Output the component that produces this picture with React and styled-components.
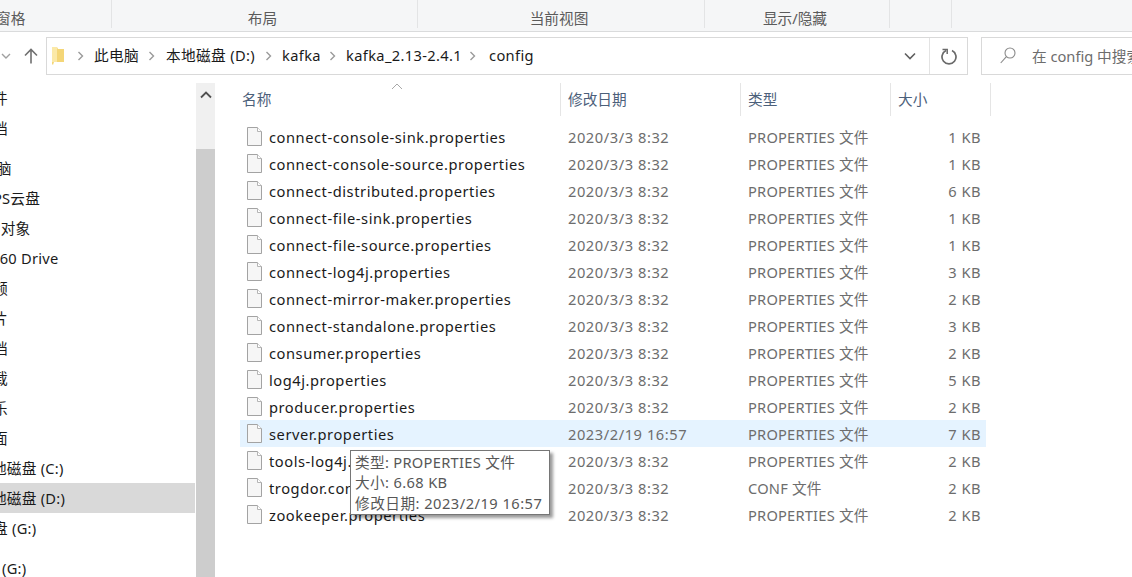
import React from 'react';
import styled, { createGlobalStyle } from 'styled-components';

const FONT = '"Noto Sans", "Noto Sans CJK SC", sans-serif';

const GlobalStyle = createGlobalStyle`
  html, body {
    margin: 0;
    padding: 0;
    background: #fff;
    overflow: hidden;
  }
  body {
    font-family: ${FONT};
    font-size: 14.67px;
  }
`;

const Window = styled.div`
  position: relative;
  width: 1132px;
  height: 577px;
  overflow: hidden;
  display: flex;
  flex-direction: column;
`;

const Ribbon = styled.div`
  display: flex;
  flex: none;
  height: 31px;
  background: #f5f6f7;
  border-bottom: 1px solid #dadbdc;
`;
const RibbonGroup = styled.div`
  display: flex;
  flex: none;
  justify-content: center;
  width: ${(p) => p.$width}px;
  height: 28px;
  padding: 8px 4px 0 0;
  box-sizing: border-box;
  line-height: 20px;
  color: #5b5b5b;
  border-right: 1px solid #e3e4e5;
  overflow: hidden;
  white-space: nowrap;
`;
const ClippedGroup = styled(RibbonGroup)`
  justify-content: flex-start;
  span {
    margin-left: -4px;
  }
`;

const AddressRow = styled.div`
  display: flex;
  flex: none;
  align-items: center;
  height: 38px;
  margin-top: 5px;
  margin-bottom: 8px;
`;
const NavButtons = styled.div`
  display: flex;
  align-items: center;
  flex: none;
  width: 46px;
  padding-left: 1px;
  box-sizing: border-box;
  gap: 13px;
`;
const AddressBar = styled.div`
  display: flex;
  align-items: center;
  flex: none;
  width: 922px;
  height: 38px;
  box-sizing: border-box;
  border: 1px solid #d9d9d9;
  background: #fff;
`;
const FolderSlot = styled.div`
  display: flex;
  flex: none;
  width: 30px;
  padding-left: 5px;
  box-sizing: border-box;
`;
const Crumbs = styled.div`
  display: flex;
  flex: 1;
  align-items: center;
  color: #1a1a1a;
  white-space: nowrap;
  letter-spacing: 0.35px;
`;
const Crumb = styled.span`
  width: ${(p) => p.$width}px;
  flex: none;
  line-height: 35px;
  padding-bottom: 1px;
`;
const Chevron = styled.svg`
  flex: none;
  width: 7px;
  height: 10px;
  margin-right: ${(p) => p.$gap}px;
`;
const BarAction = styled.div`
  display: flex;
  align-items: center;
  justify-content: center;
  flex: none;
  width: ${(p) => p.$width}px;
  height: 36px;
  box-sizing: border-box;
  border-left: ${(p) => (p.$divided ? '1px solid #e3e3e3' : 'none')};
`;
const SearchBox = styled.div`
  display: flex;
  align-items: center;
  flex: none;
  width: 200px;
  height: 38px;
  margin-left: 13px;
  padding: 0 0 1px 18px;
  gap: 16px;
  box-sizing: border-box;
  border: 1px solid #d9d9d9;
  color: #6d6d6d;
  white-space: nowrap;
  overflow: hidden;
`;

const Body = styled.div`
  display: flex;
  flex: 1;
  min-height: 0;
`;

const Nav = styled.div`
  flex: none;
  width: 196px;
  overflow: hidden;
`;
const NavRow = styled.div`
  height: 30px;
  line-height: 30px;
  margin-top: ${(p) => (p.$gap ? 10 : 0)}px;
  margin-right: 1px;
  box-sizing: border-box;
  color: #1a1a1a;
  white-space: nowrap;
  letter-spacing: 0.25px;
  background: ${(p) => (p.$selected ? '#d9d9d9' : 'transparent')};
`;
const NavLabel = styled.span`
  display: inline-block;
  margin-left: ${(p) => p.$shift}px;
`;

const ScrollTrack = styled.div`
  display: flex;
  flex-direction: column;
  flex: none;
  width: 19px;
  background: #f0f0f0;
`;
const ScrollUp = styled.div`
  display: flex;
  align-items: center;
  justify-content: center;
  height: 66px;
  padding-bottom: 43px;
  box-sizing: border-box;
`;
const ScrollThumb = styled.div`
  flex: 1;
  background: #cdcdcd;
`;

const Files = styled.div`
  position: relative;
  flex: 1;
  min-width: 0;
`;
const ColumnHeader = styled.div`
  display: grid;
  grid-template-columns: 320px 180px 150px 100px;
  margin-left: 26px;
  width: 750px;
  height: 33px;
  margin-bottom: 7px;
  color: #4c607a;
`;
const HeaderCell = styled.div`
  line-height: 33px;
  padding-left: ${(p) => p.$pad}px;
  border-right: 1px solid #e5e5e5;
  box-sizing: border-box;
`;
const SortCaret = styled.svg`
  position: absolute;
  left: 176px;
  top: 0;
  width: 12px;
  height: 7px;
`;
const FileRow = styled.div`
  display: grid;
  grid-template-columns: 321px 180px 149px 91px;
  align-items: center;
  width: 746px;
  height: 27px;
  margin-left: 25px;
  background: ${(p) => (p.$hovered ? '#e5f3ff' : 'transparent')};
`;
const NameCell = styled.div`
  display: flex;
  align-items: center;
  padding-left: 7px;
  gap: 7px;
  color: #1a1a1a;
  white-space: nowrap;
  letter-spacing: 0.55px;
`;
const DateCell = styled.div`
  color: #6d6d6d;
  white-space: nowrap;
  padding-left: 7px;
  letter-spacing: 0.55px;
`;
const TypeCell = styled.div`
  color: #6d6d6d;
  white-space: nowrap;
  padding-left: 7px;
  letter-spacing: 0.2px;
`;
const SizeCell = styled.div`
  color: #6d6d6d;
  text-align: right;
  white-space: nowrap;
  letter-spacing: 0.5px;
`;
const Tooltip = styled.div`
  position: absolute;
  left: 135px;
  top: 367px;
  width: 200px;
  height: 65px;
  box-sizing: border-box;
  padding: 1px 4px;
  background: #fff;
  border: 1px solid #767676;
  box-shadow: 3px 3px 3px rgba(0, 0, 0, 0.4);
  color: #575757;
  white-space: nowrap;
`;
const TooltipLine = styled.div`
  line-height: 20.4px;
  letter-spacing: ${(p) => p.$track}px;
`;

const files = [
  ['connect-console-sink.properties', '2020/3/3 8:32', 'PROPERTIES 文件', '1 KB'],
  ['connect-console-source.properties', '2020/3/3 8:32', 'PROPERTIES 文件', '1 KB'],
  ['connect-distributed.properties', '2020/3/3 8:32', 'PROPERTIES 文件', '6 KB'],
  ['connect-file-sink.properties', '2020/3/3 8:32', 'PROPERTIES 文件', '1 KB'],
  ['connect-file-source.properties', '2020/3/3 8:32', 'PROPERTIES 文件', '1 KB'],
  ['connect-log4j.properties', '2020/3/3 8:32', 'PROPERTIES 文件', '3 KB'],
  ['connect-mirror-maker.properties', '2020/3/3 8:32', 'PROPERTIES 文件', '2 KB'],
  ['connect-standalone.properties', '2020/3/3 8:32', 'PROPERTIES 文件', '3 KB'],
  ['consumer.properties', '2020/3/3 8:32', 'PROPERTIES 文件', '2 KB'],
  ['log4j.properties', '2020/3/3 8:32', 'PROPERTIES 文件', '5 KB'],
  ['producer.properties', '2020/3/3 8:32', 'PROPERTIES 文件', '2 KB'],
  ['server.properties', '2023/2/19 16:57', 'PROPERTIES 文件', '7 KB'],
  ['tools-log4j.properties', '2020/3/3 8:32', 'PROPERTIES 文件', '2 KB'],
  ['trogdor.conf', '2020/3/3 8:32', 'CONF 文件', '2 KB'],
  ['zookeeper.properties', '2020/3/3 8:32', 'PROPERTIES 文件', '2 KB'],
];

const navItems = [
  { label: '文件', shift: -22 },
  { label: '文档', shift: -22 },
  { label: '此电脑', shift: -33, gap: true },
  { label: 'WPS云盘', shift: -21 },
  { label: '3D 对象', shift: -23 },
  { label: '360 Drive', shift: -9 },
  { label: '视频', shift: -22 },
  { label: '图片', shift: -22 },
  { label: '文档', shift: -22 },
  { label: '下载', shift: -22 },
  { label: '音乐', shift: -22 },
  { label: '桌面', shift: -22 },
  { label: '本地磁盘 (C:)', shift: -23 },
  { label: '本地磁盘 (D:)', shift: -23, selected: true },
  { label: 'U 盘 (G:)', shift: -22 },
  { label: 'U 盘 (G:)', shift: -32, gap: true },
];

const FileIcon = () => (
  <svg width="15" height="19" viewBox="0 0 15 19" style={{ flex: 'none' }}>
    <path d="M.5.5h10l4 4v14H.5z" fill="#f6f6f6" stroke="#a3a3a3" />
    <path d="M10.5.5v4h4" fill="#fff" stroke="#b5b5b5" />
  </svg>
);

const FolderIcon = () => (
  <svg width="12" height="18" viewBox="0 0 12 18">
    <path d="M0 0h5l1 2h6v13H2l-1 3-1-1z" fill="#f4d677" />
    <path d="M0 0h5v15H0z" fill="#fbe9a8" />
  </svg>
);

const CrumbChevron = ({ gap }) => (
  <Chevron $gap={gap} viewBox="0 0 7 10">
    <path d="M1.5 1l4 4-4 4" fill="none" stroke="#9a9a9a" strokeWidth="1.4" />
  </Chevron>
);

export default function App() {
  return (
    <Window>
      <GlobalStyle />
      <Ribbon>
        <ClippedGroup $width={112}><span>窗格</span></ClippedGroup>
        <RibbonGroup $width={306}>布局</RibbonGroup>
        <RibbonGroup $width={287}>当前视图</RibbonGroup>
        <RibbonGroup $width={185}>显示/隐藏</RibbonGroup>
        <RibbonGroup $width={62} />
      </Ribbon>

      <AddressRow>
        <NavButtons>
          <svg width="10" height="7" viewBox="0 0 10 7">
            <path d="M1 1l4 4 4-4" fill="none" stroke="#a0a0a0" strokeWidth="1.4" />
          </svg>
          <svg width="14" height="16" viewBox="0 0 14 16">
            <path d="M7 15.5V1.5M1 7.5l6-6 6 6" fill="none" stroke="#707070" strokeWidth="1.6" />
          </svg>
        </NavButtons>
        <AddressBar>
          <FolderSlot><FolderIcon /></FolderSlot>
          <Crumbs>
            <CrumbChevron gap={10} />
            <Crumb $width={54}>此电脑</Crumb>
            <CrumbChevron gap={11} />
            <Crumb $width={99}>本地磁盘 (D:)</Crumb>
            <CrumbChevron gap={10} />
            <Crumb $width={47}>kafka</Crumb>
            <CrumbChevron gap={10} />
            <Crumb $width={123}>kafka_2.13-2.4.1</Crumb>
            <CrumbChevron gap={13} />
            <Crumb $width={60}>config</Crumb>
          </Crumbs>
          <BarAction $width={38}>
            <svg width="12" height="8" viewBox="0 0 12 8">
              <path d="M1 1.5l5 5 5-5" fill="none" stroke="#606060" strokeWidth="1.6" />
            </svg>
          </BarAction>
          <BarAction $width={38} $divided>
            <svg width="16" height="18" viewBox="0 0 16 18">
              <path d="M5 3.6a7 7 0 1 0 6 0" fill="none" stroke="#6a6a6a" strokeWidth="1.7" />
              <path d="M1.5 2.4H6.2V7" fill="none" stroke="#6a6a6a" strokeWidth="1.5" />
            </svg>
          </BarAction>
        </AddressBar>
        <SearchBox>
          <svg width="16" height="17" viewBox="0 0 16 17" style={{ flex: 'none' }}>
            <circle cx="10" cy="6" r="5" fill="none" stroke="#8a8a8a" strokeWidth="1.1" />
            <path d="M6.4 9.6L.7 16" fill="none" stroke="#8a8a8a" strokeWidth="1.1" />
          </svg>
          <span>在 config 中搜索</span>
        </SearchBox>
      </AddressRow>

      <Body>
        <Nav>
          {navItems.map((item, i) => (
            <NavRow key={i} $gap={item.gap} $selected={item.selected}>
              <NavLabel $shift={item.shift}>{item.label}</NavLabel>
            </NavRow>
          ))}
        </Nav>
        <ScrollTrack>
          <ScrollUp>
            <svg width="12" height="8" viewBox="0 0 12 8">
              <path d="M1 6.5l5-5 5 5" fill="none" stroke="#505050" strokeWidth="1.8" />
            </svg>
          </ScrollUp>
          <ScrollThumb />
        </ScrollTrack>
        <Files>
          <SortCaret viewBox="0 0 12 7">
            <path d="M1 6l5-5 5 5" fill="none" stroke="#a8a8a8" />
          </SortCaret>
          <ColumnHeader>
            <HeaderCell $pad={1}>名称</HeaderCell>
            <HeaderCell $pad={7}>修改日期</HeaderCell>
            <HeaderCell $pad={7}>类型</HeaderCell>
            <HeaderCell $pad={7}>大小</HeaderCell>
          </ColumnHeader>
          {files.map((f) => (
            <FileRow key={f[0]} $hovered={f[0] === 'server.properties'}>
              <NameCell><FileIcon />{f[0]}</NameCell>
              <DateCell>{f[1]}</DateCell>
              <TypeCell>{f[2]}</TypeCell>
              <SizeCell>{f[3]}</SizeCell>
            </FileRow>
          ))}
          <Tooltip>
            <TooltipLine $track={0.3}>类型: PROPERTIES 文件</TooltipLine>
            <TooltipLine $track={0.36}>大小: 6.68 KB</TooltipLine>
            <TooltipLine $track={0.48}>修改日期: 2023/2/19 16:57</TooltipLine>
          </Tooltip>
        </Files>
      </Body>
    </Window>
  );
}
